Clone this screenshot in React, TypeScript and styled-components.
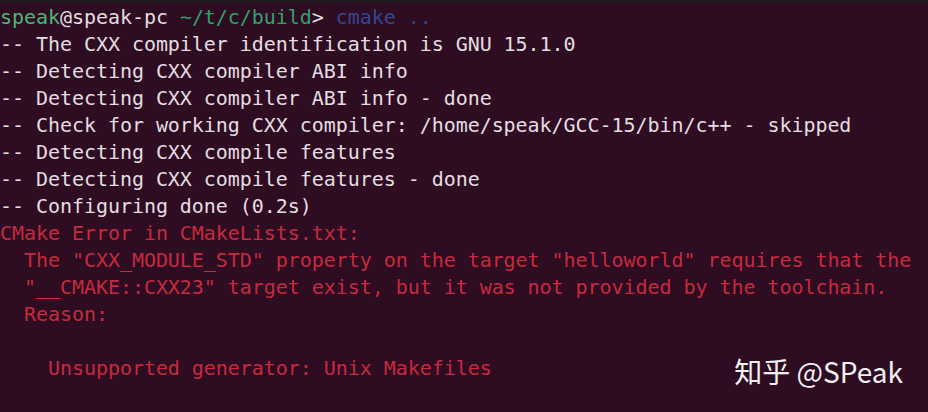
import React from "react";
import styled, { createGlobalStyle } from "styled-components";

const Global = createGlobalStyle`
  html, body { margin: 0; padding: 0; background: #2e0c22; }
  body { width: 928px; height: 412px; overflow: hidden; }
`;

const Terminal = styled.div`
  position: relative;
  box-sizing: border-box;
  width: 928px;
  height: 412px;
  background: #2e0c22;
  border-top: 3px solid #1f1a1d;
  padding: 1px 0 0 0;
  overflow: hidden;
`;

const Line = styled.div`
  font-family: "DejaVu Sans Mono", "Liberation Mono", monospace;
  font-size: 20px;
  letter-spacing: -0.05px;
  line-height: 27px;
  height: 27px;
  white-space: pre;
  color: #e4dde1;
  -webkit-font-smoothing: antialiased;
`;

type Tone = "user" | "path" | "cmd" | "err" | "plain";

const toneColor: Record<Tone, string> = {
  user: "#4db57a",
  path: "#32a06d",
  cmd: "#34478f",
  err: "#c62a3e",
  plain: "#e4dde1",
};

const Seg = styled.span<{ $tone: Tone }>`
  color: ${(p) => toneColor[p.$tone]};
`;

const Watermark = styled.div`
  position: absolute;
  right: 25px;
  bottom: 24px;
  font-family: "Noto Sans CJK SC", "Noto Sans", sans-serif;
  font-size: 28px;
  line-height: 34px;
  color: #f4f0f2;
  white-space: pre;
`;

const plainLines = [
  "-- The CXX compiler identification is GNU 15.1.0",
  "-- Detecting CXX compiler ABI info",
  "-- Detecting CXX compiler ABI info - done",
  "-- Check for working CXX compiler: /home/speak/GCC-15/bin/c++ - skipped",
  "-- Detecting CXX compile features",
  "-- Detecting CXX compile features - done",
  "-- Configuring done (0.2s)",
];

const errLines = [
  "CMake Error in CMakeLists.txt:",
  '  The "CXX_MODULE_STD" property on the target "helloworld" requires that the',
  '  "__CMAKE::CXX23" target exist, but it was not provided by the toolchain.',
  "  Reason:",
  "",
  "    Unsupported generator: Unix Makefiles",
];

export default function App() {
  return (
    <>
      <Global />
      <Terminal>
        <Line>
          <Seg $tone="user">speak</Seg>
          <Seg $tone="plain">@speak-pc </Seg>
          <Seg $tone="path">~/t/c/build</Seg>
          <Seg $tone="plain">{"> "}</Seg>
          <Seg $tone="cmd">cmake ..</Seg>
        </Line>
        {plainLines.map((l, i) => (
          <Line key={"p" + i}>
            <Seg $tone="plain">{l}</Seg>
          </Line>
        ))}
        {errLines.map((l, i) => (
          <Line key={"e" + i}>
            <Seg $tone="err">{l}</Seg>
          </Line>
        ))}
        <Watermark>知乎 @SPeak</Watermark>
      </Terminal>
    </>
  );
}
